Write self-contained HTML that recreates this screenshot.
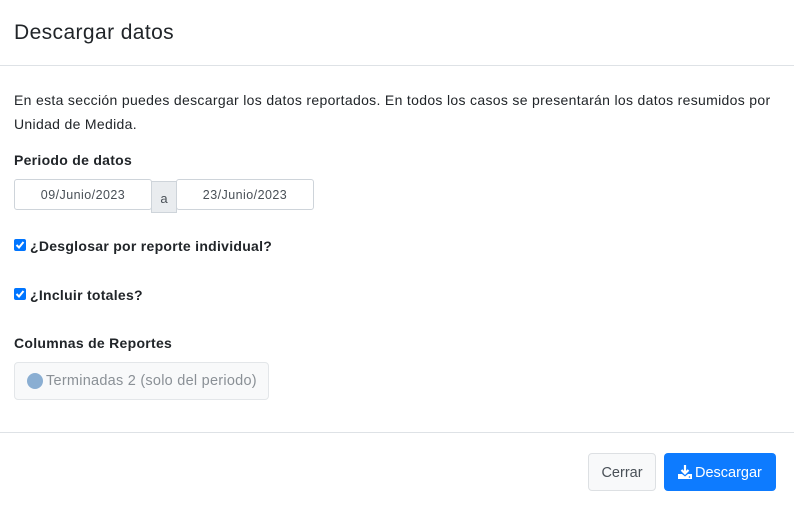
<!DOCTYPE html>
<html><head><meta charset="utf-8"><style>
*{box-sizing:border-box;margin:0;padding:0}
body{width:794px;height:508px;background:#fff;font-family:"Liberation Sans",sans-serif;color:#212529;position:relative;overflow:hidden}
.a{position:absolute;white-space:nowrap}
.hr{position:absolute;left:0;width:794px;height:1px;background:#dee2e6}
.inp{position:absolute;border:1px solid #ced4da;border-radius:3px;font-size:12.5px;color:#495057;text-align:center;line-height:31px;background:#fff;letter-spacing:0.45px}
.cb{position:absolute;width:12px;height:12px;background:#0075ff;border-radius:2px}
.cb svg{position:absolute;left:1px;top:1px}
.lb{font-size:14px;font-weight:bold;letter-spacing:0.28px}
</style></head><body>
<div class="a" style="left:14px;top:21px;font-size:21px;color:#212529;letter-spacing:0.4px">Descargar datos</div>
<div class="hr" style="top:65px"></div>
<div class="a" style="left:14px;top:88px;font-size:14px;line-height:24px;white-space:normal;width:775px;letter-spacing:0.32px">En esta sección puedes descargar los datos reportados. En todos los casos se presentarán los datos resumidos por Unidad de Medida.</div>
<div class="a lb" style="left:14px;top:152px">Periodo de datos</div>
<div class="inp" style="left:14px;top:179px;width:138px;height:31px">09/Junio/2023</div>
<div class="a" style="left:151px;top:181px;width:26px;height:32px;background:#e9ecef;border:1px solid #ced4da;font-size:13px;text-align:center;line-height:34px;color:#495057">a</div>
<div class="inp" style="left:176px;top:179px;width:138px;height:31px">23/Junio/2023</div>
<div class="cb" style="left:14px;top:239px"><svg width="10" height="10" viewBox="0 0 10 10"><path d="M1.5 5 L4 7.5 L8.5 2" stroke="#fff" stroke-width="2" fill="none"/></svg></div>
<div class="a lb" style="left:30px;top:238px">¿Desglosar por reporte individual?</div>
<div class="cb" style="left:14px;top:288px"><svg width="10" height="10" viewBox="0 0 10 10"><path d="M1.5 5 L4 7.5 L8.5 2" stroke="#fff" stroke-width="2" fill="none"/></svg></div>
<div class="a lb" style="left:30px;top:287px">¿Incluir totales?</div>
<div class="a lb" style="left:14px;top:335px">Columnas de Reportes</div>
<div class="a" style="left:14px;top:362px;width:255px;height:38px;background:#f8f9fa;border:1px solid #e3e6e9;border-radius:4px"></div>
<div class="a" style="left:27px;top:373px;width:16px;height:16px;border-radius:50%;background:#8aaed2"></div>
<div class="a" style="left:46px;top:373px;font-size:14.5px;color:#8a9096;letter-spacing:0.25px">Terminadas 2 (solo del periodo)</div>
<div class="hr" style="top:432px"></div>
<div class="a" style="left:588px;top:453px;width:68px;height:38px;background:#f8f9fa;border:1px solid #dde0e3;border-radius:4px;font-size:14.5px;color:#495057;text-align:center;line-height:38px">Cerrar</div>
<div class="a" style="left:664px;top:453px;width:112px;height:38px;background:#0d7bff;border-radius:4px;font-size:14.5px;color:#fff;line-height:40px;padding-left:31px">Descargar</div>
<svg class="a" style="left:677px;top:464px" width="16" height="16" viewBox="0 0 16 16"><path d="M8 1v8M4.5 6l3.5 3.5L11.5 6" stroke="#fff" stroke-width="2.2" fill="none"/><path d="M1 10h4l3 2.5 3-2.5h4v5H1z" fill="#fff"/><circle cx="12.5" cy="13" r="0.8" fill="#0d7bff"/></svg>
</body></html>
